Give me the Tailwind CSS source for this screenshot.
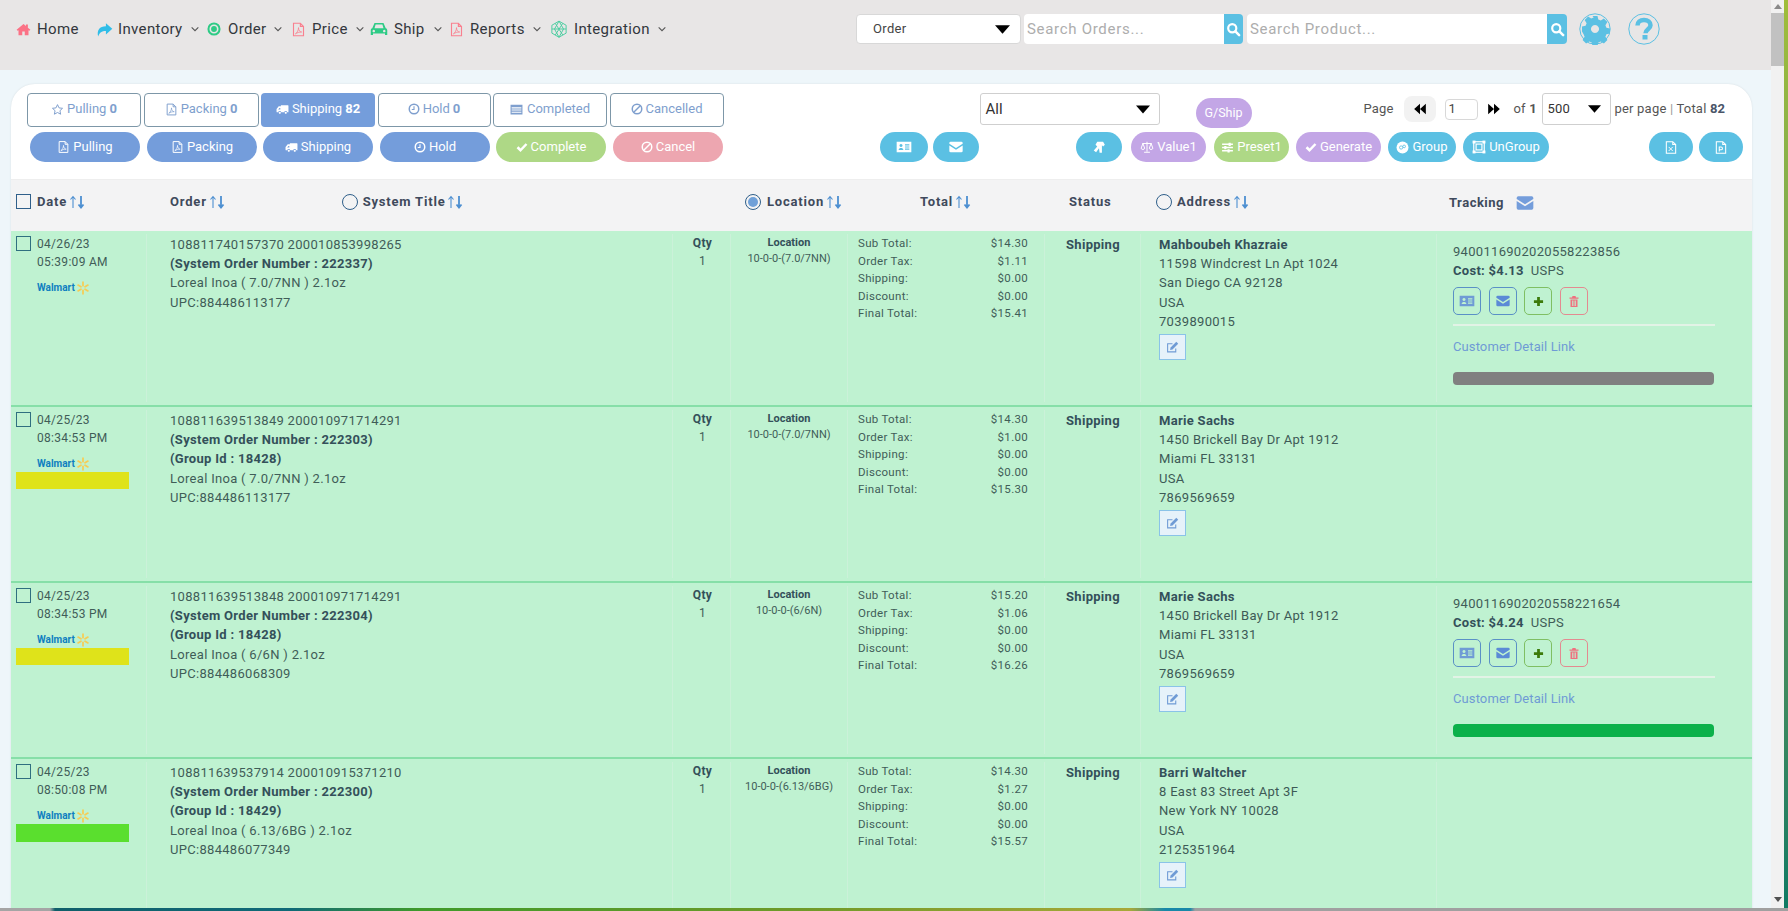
<!DOCTYPE html>
<html><head><meta charset="utf-8">
<script src="https://cdn.jsdelivr.net/npm/@tailwindcss/browser@4"></script>
<title>Orders</title></head>
<body class="h-[911px] w-[1788px] overflow-hidden font-['Roboto',sans-serif] bg-[#eef6fa]">
<svg class="hidden" width="0" height="0">
<symbol id="home" viewBox="0 0 24 24"><path fill="currentColor" d="M12 3 1 12.500l1.500 1.600L4 13v8h6v-6h4v6h6v-8l1.500 1.100L23 12.500 19 9V4h-3v2.400z"/></symbol>
<symbol id="share" viewBox="0 0 24 24"><path fill="currentColor" d="M14 3l9 8-9 8v-5C8 14 5 16 3 22 1 13 5 7.500 14 7.500z"/></symbol>
<symbol id="dot" viewBox="0 0 24 24"><circle cx="12" cy="12" r="9.500" fill="none" stroke="currentColor" stroke-width="3.500"/><circle cx="12" cy="12" r="5" fill="currentColor"/></symbol>
<symbol id="pdf" viewBox="0 0 24 24"><path fill="none" stroke="currentColor" stroke-width="1.800" d="M4 2h11l5 5v15H4zM15 2v5h5"/><path fill="none" stroke="currentColor" stroke-width="1.300" d="M7 19c3-2 5-6 5-10 0 4 2 7 5 7-4 0-7 1-10 3z"/></symbol>
<symbol id="car" viewBox="0 0 24 24"><path fill="currentColor" d="M6 4h12l3 7c1.500.5 2 1.500 2 3v6h-3v-2H4v2H1v-6c0-1.500.5-2.500 2-3zm1.500 2L6 11h12l-1.500-5zM5 13a1.700 1.700 0 1 0 .01 0zM19 13a1.700 1.700 0 1 0 .01 0z" fill-rule="evenodd"/></symbol>
<symbol id="hex" viewBox="0 0 24 24"><g fill="none" stroke="currentColor" stroke-width="1.300"><path d="M12 1.500 21.500 7v10.500L12 23 2.500 17.500V7z"/><path d="M7 4.500 17 20M17 4.500 7 20M2.500 12h19M12 1.500 6 12l6 11 6-11z"/></g></symbol>
<symbol id="chev" viewBox="0 0 12 12"><path fill="none" stroke="currentColor" stroke-width="1.300" d="M2 4l4 4 4-4"/></symbol>
<symbol id="search" viewBox="0 0 24 24"><circle cx="10" cy="10" r="6.500" fill="none" stroke="currentColor" stroke-width="3.500"/><path stroke="currentColor" stroke-width="4" stroke-linecap="round" d="M15 15l6 6"/></symbol>
<symbol id="star" viewBox="0 0 24 24"><path fill="none" stroke="currentColor" stroke-width="1.800" d="M12 3l2.800 6 6.500.8-4.800 4.400 1.300 6.500L12 17.500l-5.800 3.200 1.300-6.500L2.700 9.800 9.200 9z"/></symbol>
<symbol id="truck" viewBox="0 0 24 24"><path fill="currentColor" d="M9 4h13a1 1 0 0 1 1 1v12h-2.200a3 3 0 0 0-5.800 0H9.800a3 3 0 0 0-5.800 0H2a1 1 0 0 1-1-1v-5l4-5h4zM4 12h4V9H6.400zM7 16a2 2 0 1 1-.01 0zM18 16a2 2 0 1 1-.01 0z" fill-rule="evenodd"/></symbol>
<symbol id="clock" viewBox="0 0 24 24"><circle cx="12" cy="12" r="9.500" fill="none" stroke="currentColor" stroke-width="3"/><path fill="none" stroke="currentColor" stroke-width="2.200" d="M12 6.500V13H7.500"/></symbol>
<symbol id="list" viewBox="0 0 24 24"><path fill="currentColor" fill-rule="evenodd" d="M1 3h22v18H1zM3 8v2h18V8zM3 12v2h18v-2zM3 16v2h18v-2z"/></symbol>
<symbol id="ban" viewBox="0 0 24 24"><circle cx="12" cy="12" r="9.500" fill="none" stroke="currentColor" stroke-width="3"/><path stroke="currentColor" stroke-width="3" d="M5.500 18.500l13-13"/></symbol>
<symbol id="check" viewBox="0 0 24 24"><path fill="none" stroke="currentColor" stroke-width="5" d="M3 12.500l6 6L21 6"/></symbol>
<symbol id="idcard" viewBox="0 0 24 24"><path fill="currentColor" fill-rule="evenodd" d="M1 4h22v16H1zM13.500 8v1.600H20V8zM13.500 11.200v1.600H20v-1.600zM13.500 14.400V16H20v-1.600zM7.500 7.500a2.300 2.300 0 1 0 .01 0zM4 16.500h7c0-4-7-4-7 0z"/></symbol>
<symbol id="mail" viewBox="0 0 24 24"><path fill="currentColor" d="M4 4h16a2 2 0 0 1 2 2v1.200L12 13.500 2 7.200V6a2 2 0 0 1 2-2zM2 9.700l10 6.300 10-6.300V18a2 2 0 0 1-2 2H4a2 2 0 0 1-2-2z"/></symbol>
<symbol id="wrench" viewBox="0 0 24 24"><path fill="currentColor" d="M13 3h6l3 5-3 3-2-2v13h-4l-1-8-5 7-4-3 6-7-3-3 3-5z"/></symbol>
<symbol id="scale" viewBox="0 0 24 24"><path fill="none" stroke="currentColor" stroke-width="1.700" d="M12 3v17M7 21h10M4 6h16M5 6 2 14c0 3 6 3 6 0zM19 6l-3 8c0 3 6 3 6 0z"/></symbol>
<symbol id="sliders" viewBox="0 0 24 24"><path fill="none" stroke="currentColor" stroke-width="2.400" d="M2 6h20M2 12h20M2 18h20"/><path fill="currentColor" d="M14 3h4v6h-4zM6 9h4v6H6zM12 15h4v6h-4z"/></symbol>
<symbol id="group" viewBox="0 0 24 24"><circle cx="12" cy="12" r="11" fill="currentColor"/><circle cx="9.500" cy="12" r="3" fill="none" stroke="#5bc0e3" stroke-width="1.500"/><circle cx="15" cy="10" r="2.500" fill="none" stroke="#5bc0e3" stroke-width="1.500"/></symbol>
<symbol id="ungroup" viewBox="0 0 24 24"><g fill="none" stroke="currentColor" stroke-width="2"><rect x="3" y="3" width="18" height="18"/><rect x="7" y="7" width="10" height="10"/></g><g fill="currentColor"><rect x="1" y="1" width="5" height="5"/><rect x="18" y="1" width="5" height="5"/><rect x="1" y="18" width="5" height="5"/><rect x="18" y="18" width="5" height="5"/></g></symbol>
<symbol id="plus" viewBox="0 0 24 24"><path stroke="currentColor" stroke-width="6" d="M12 2v20M2 12h20"/></symbol>
<symbol id="trash" viewBox="0 0 24 24"><path fill="currentColor" fill-rule="evenodd" d="M9 1h6l1 3h5v2.500H3V4h5zM5 8h14v15H5zM8 10v11h1.500V10zM11.300 10v11h1.500V10zM14.500 10v11H16V10z"/></symbol>
<symbol id="edit" viewBox="0 0 24 24"><path fill="none" stroke="currentColor" stroke-width="2" d="M18 14v6H3V5h9"/><path fill="currentColor" d="M19 1.500l3.500 3.500L12 15.500l-4.500 1 1-4.500z"/></symbol>
<symbol id="sort" viewBox="0 0 16 14"><g fill="none" stroke="#4d8fd1"><path stroke-width="1.100" d="M4 13V2M1.500 4.500 4 1.500l2.500 3"/><path stroke-width="1.800" d="M12 1v11M9.500 9.500 12 12.500l2.500-3"/></g></symbol>
<symbol id="left" viewBox="0 0 24 24"><path fill="currentColor" d="M12 3v18L2 12zM22 3v18l-10-9z"/></symbol>
<symbol id="right" viewBox="0 0 24 24"><path fill="currentColor" d="M12 3v18l10-9zM2 3v18l10-9z"/></symbol>
<symbol id="spark" viewBox="0 0 24 24"><path stroke="#f6cd55" stroke-width="3" stroke-linecap="round" d="M12 2v6M12 16v6M3.500 7l5 3M15.500 14l5 3M3.500 17l5-3M15.500 10l5-3"/></symbol>
<symbol id="gear" viewBox="0 0 32 32"><circle cx="16" cy="16" r="15.200" fill="none" stroke="#5bc0e3" stroke-width="1"/><path fill="#5bc0e3" fill-rule="evenodd" d="M13.500 3h5l.8 3.600 2.500 1 3.100-2 3.500 3.500-2 3.100 1 2.500 3.600.8v5l-3.600.8-1 2.500 2 3.100-3.500 3.500-3.100-2-2.500 1-.8 3.600h-5l-.8-3.600-2.500-1-3.100 2-3.500-3.500 2-3.100-1-2.500L3 18.500v-5l3.600-.8 1-2.500-2-3.100 3.500-3.500 3.100 2 2.500-1zM16 12a4 4 0 1 0 .01 0z"/></symbol>
<symbol id="help" viewBox="0 0 32 32"><circle cx="16" cy="16" r="15.200" fill="none" stroke="#5bc0e3" stroke-width="1"/><path fill="none" stroke="#5bc0e3" stroke-width="4.500" d="M9.500 12.500C9.500 9 12 7 16 7s6.500 2 6.500 5.200c0 4-5 4-5 8"/><rect x="14.500" y="22" width="5" height="4.500" fill="#5bc0e3"/></symbol>
<symbol id="xl" viewBox="0 0 24 24"><path fill="none" stroke="currentColor" stroke-width="1.800" d="M4 2h11l5 5v15H4zM15 2v5h5"/><path stroke="currentColor" stroke-width="1.600" d="M8 11l7 7M15 11l-7 7"/></symbol>
<symbol id="pp" viewBox="0 0 24 24"><path fill="none" stroke="currentColor" stroke-width="1.800" d="M4 2h11l5 5v15H4zM15 2v5h5M9 19v-8h3a2.500 2.500 0 0 1 0 5H9"/></symbol>
</svg>

<div class="flex h-[908px]">
<div class="w-[1771px] shrink-0 overflow-hidden">
  <!-- top nav -->
  <nav class="flex h-[70px] items-start bg-[#e8e6e6] pl-[16px] pt-[14px] text-[15px] leading-[30px] tracking-[0.35px] text-[#33373d]">
    <div class="flex items-center w-[80px]"><svg class="w-[15px] h-[15px] text-[#fb7286] mr-[6px]"><use href="#home"/></svg>Home</div>
    <div class="flex items-center w-[111px]"><svg class="w-[17px] h-[17px] text-[#30bde8] mr-[5px]"><use href="#share"/></svg>Inventory<svg class="w-[10px] h-[10px] ml-[7px] text-[#555]"><use href="#chev"/></svg></div>
    <div class="flex items-center w-[84px]"><svg class="w-[14px] h-[14px] text-[#2ecb86] mr-[7px]"><use href="#dot"/></svg>Order<svg class="w-[10px] h-[10px] ml-[6px] text-[#555]"><use href="#chev"/></svg></div>
    <div class="flex items-center w-[79px]"><svg class="w-[15px] h-[17px] text-[#f9808f] mr-[6px]"><use href="#pdf"/></svg>Price<svg class="w-[10px] h-[10px] ml-[7px] text-[#555]"><use href="#chev"/></svg></div>
    <div class="flex items-center w-[79px]"><svg class="w-[18px] h-[18px] text-[#2ecb86] mr-[6px]"><use href="#car"/></svg>Ship<svg class="w-[10px] h-[10px] ml-[8px] text-[#555]"><use href="#chev"/></svg></div>
    <div class="flex items-center w-[101px]"><svg class="w-[15px] h-[17px] text-[#f9808f] mr-[6px]"><use href="#pdf"/></svg>Reports<svg class="w-[10px] h-[10px] ml-[7px] text-[#555]"><use href="#chev"/></svg></div>
    <div class="flex items-center w-[124px]"><svg class="w-[18px] h-[18px] text-[#4ccda0] mr-[6px]"><use href="#hex"/></svg>Integration<svg class="w-[10px] h-[10px] ml-[7px] text-[#555]"><use href="#chev"/></svg></div>
    <div class="ml-[182px] flex w-[165px] h-[30px] items-center justify-between rounded-[4px] border border-[#d8d8d8] bg-white pl-[16px] pr-[10px] text-[13px] text-[#444]"><span>Order</span><svg class="w-[15px] h-[9px] text-black" viewBox="0 0 14 8"><path fill="currentColor" d="M0 0h14L7 8z"/></svg></div>
    <div class="ml-[3px] flex h-[30px]"><input class="w-[200px] rounded-l-[4px] bg-white px-[3px] text-[15px] tracking-[0.7px] placeholder:text-[#adadad]" placeholder="Search Orders..."><div class="flex w-[19px] items-center justify-center rounded-r-[4px] bg-[#5bc0e3]"><svg class="w-[15px] h-[15px] text-white"><use href="#search"/></svg></div></div>
    <div class="ml-[4px] flex h-[30px]"><input class="w-[300px] rounded-l-[4px] bg-white px-[3px] text-[15px] tracking-[0.7px] placeholder:text-[#adadad]" placeholder="Search Product..."><div class="flex w-[20px] items-center justify-center rounded-r-[4px] bg-[#5bc0e3]"><svg class="w-[15px] h-[15px] text-white"><use href="#search"/></svg></div></div>
    <svg class="ml-[12px] w-[32px] h-[32px] -mt-[1px]"><use href="#gear"/></svg>
    <svg class="ml-[17px] w-[32px] h-[32px] -mt-[1px]"><use href="#help"/></svg>
  </nav>

  <main class="pl-[11px] pt-[14px]">
  <div class="w-[1741px] rounded-t-[24px] bg-white shadow-[0_0_2px_#d5dde0] text-[13px]">
    <!-- toolbar row 1 -->
    <div class="flex items-start h-[48px] pt-[9px] pl-[16px] text-[13px]">
      <div class="flex gap-[2.500px] text-[#7f9fce]">
        <div class="flex w-[114px] h-[34px] pb-[2px] items-center justify-center gap-[3px] rounded-[4px] border border-[#7d97a8]"><svg class="w-[13px] h-[13px]"><use href="#star"/></svg>Pulling <b>0</b></div>
        <div class="flex w-[115px] h-[34px] pb-[2px] items-center justify-center gap-[3px] rounded-[4px] border border-[#7d97a8]"><svg class="w-[13px] h-[13px]"><use href="#pdf"/></svg>Packing <b>0</b></div>
        <div class="flex w-[114px] h-[34px] pb-[2px] items-center justify-center gap-[3px] rounded-[4px] bg-[#749ddb] text-white"><svg class="w-[13px] h-[13px]"><use href="#truck"/></svg>Shipping <b>82</b></div>
        <div class="flex w-[113px] h-[34px] pb-[2px] items-center justify-center gap-[3px] rounded-[4px] border border-[#7d97a8]"><svg class="w-[12px] h-[12px]"><use href="#clock"/></svg>Hold <b>0</b></div>
        <div class="flex w-[114px] h-[34px] pb-[2px] items-center justify-center gap-[4px] rounded-[4px] border border-[#7d97a8]"><svg class="w-[13px] h-[13px]"><use href="#list"/></svg>Completed</div>
        <div class="flex w-[114px] h-[34px] pb-[2px] items-center justify-center gap-[3px] rounded-[4px] border border-[#7d97a8]"><svg class="w-[12px] h-[12px]"><use href="#ban"/></svg>Cancelled</div>
      </div>
      <div class="ml-[256px] flex w-[180px] h-[32px] items-center justify-between rounded-[3px] border border-[#cfcfcf] px-[5px] pr-[9px] text-[15px] text-[#333]"><span>All</span><svg class="w-[14px] h-[9px]" viewBox="0 0 14 8"><path d="M0 0h14L7 8z"/></svg></div>
      <div class="ml-[36px] mt-[5px] flex w-[56px] h-[30px] items-center justify-center rounded-full bg-[#c3a6e6] text-white text-[12.500px]">G/Ship</div>
      <div class="ml-[112px] flex items-center h-[32px] text-[#555] text-[13px] tracking-[0.2px]">
        <span class="w-[40px]">Page</span>
        <span class="flex w-[32px] h-[26px] items-center justify-center rounded-[8px] bg-[#f2f2f2]"><svg class="w-[14px] h-[14px] text-black"><use href="#left"/></svg></span>
        <span class="ml-[9px] flex w-[33px] h-[21px] items-center rounded-[4px] border border-[#d8d8d8] pl-[3px] text-[#444]">1</span>
        <svg class="ml-[9px] w-[14px] h-[14px] text-black"><use href="#right"/></svg>
        <span class="ml-[13px] w-[28px]">of <b>1</b></span>
        <span class="flex w-[69px] h-[32px] items-center justify-between rounded-[3px] border border-[#cfcfcf] px-[5px] pr-[9px] text-[#333]">500<svg class="w-[13px] h-[8px]" viewBox="0 0 14 8"><path d="M0 0h14L7 8z"/></svg></span>
        <span class="ml-[4px] whitespace-nowrap">per page <span class="text-[#999]">|</span> Total <b class="text-[#4a5568]">82</b></span>
      </div>
    </div>
    <!-- toolbar row 2 -->
    <div class="flex items-center h-[30px] pl-[19px] text-white text-[13px]">
      <div class="flex w-[110px] h-[30px] items-center justify-center gap-[3px] rounded-full bg-[#749ddb]"><svg class="w-[13px] h-[14px]"><use href="#pdf"/></svg>Pulling</div>
      <div class="ml-[7px] flex w-[110px] h-[30px] items-center justify-center gap-[3px] rounded-full bg-[#749ddb]"><svg class="w-[13px] h-[14px]"><use href="#pdf"/></svg>Packing</div>
      <div class="ml-[6px] flex w-[110px] h-[30px] items-center justify-center gap-[3px] rounded-full bg-[#749ddb]"><svg class="w-[13px] h-[13px]"><use href="#truck"/></svg>Shipping</div>
      <div class="ml-[7px] flex w-[110px] h-[30px] items-center justify-center gap-[3px] rounded-full bg-[#749ddb]"><svg class="w-[12px] h-[12px]"><use href="#clock"/></svg>Hold</div>
      <div class="ml-[6px] flex w-[110px] h-[30px] items-center justify-center gap-[3px] rounded-full bg-[#aed886]"><svg class="w-[12px] h-[12px]"><use href="#check"/></svg>Complete</div>
      <div class="ml-[7px] flex w-[110px] h-[30px] items-center justify-center gap-[3px] rounded-full bg-[#eda6b0]"><svg class="w-[12px] h-[12px]"><use href="#ban"/></svg>Cancel</div>
      <div class="ml-[157px] flex w-[48px] h-[30px] items-center justify-center rounded-full bg-[#5bc0e3]"><svg class="w-[16px] h-[16px]"><use href="#idcard"/></svg></div>
      <div class="ml-[5px] flex w-[46px] h-[30px] items-center justify-center rounded-full bg-[#5bc0e3]"><svg class="w-[16px] h-[16px]"><use href="#mail"/></svg></div>
      <div class="ml-[97px] flex w-[46px] h-[30px] items-center justify-center rounded-full bg-[#5bc0e3]"><svg class="w-[14px] h-[14px]"><use href="#wrench"/></svg></div>
      <div class="ml-[9px] flex w-[75px] h-[30px] items-center justify-center gap-[3px] rounded-full bg-[#c3a6e6]"><svg class="w-[14px] h-[14px]"><use href="#scale"/></svg>Value1</div>
      <div class="ml-[8px] flex w-[75px] h-[30px] items-center justify-center gap-[3px] rounded-full bg-[#aed886]"><svg class="w-[13px] h-[13px]"><use href="#sliders"/></svg>Preset1</div>
      <div class="ml-[7px] flex w-[85px] h-[30px] items-center justify-center gap-[3px] rounded-full bg-[#c3a6e6]"><svg class="w-[12px] h-[12px]"><use href="#check"/></svg>Generate</div>
      <div class="ml-[7px] flex w-[68px] h-[30px] items-center justify-center gap-[3px] rounded-full bg-[#5bc0e3]"><svg class="w-[13px] h-[13px]"><use href="#group"/></svg>Group</div>
      <div class="ml-[7px] flex w-[86px] h-[30px] items-center justify-center gap-[3px] rounded-full bg-[#5bc0e3]"><svg class="w-[14px] h-[14px]"><use href="#ungroup"/></svg>UnGroup</div>
      <div class="ml-[100px] flex w-[44px] h-[30px] items-center justify-center rounded-full bg-[#5bc0e3]"><svg class="w-[14px] h-[15px]"><use href="#xl"/></svg></div>
      <div class="ml-[6px] flex w-[44px] h-[30px] items-center justify-center rounded-full bg-[#5bc0e3]"><svg class="w-[14px] h-[15px]"><use href="#pp"/></svg></div>
    </div>
    <div class="h-[17px]"></div>
    <!-- table header -->
    <div class="grid grid-cols-[136px_526px_58px_117px_197px_96px_296px_315px] h-[52px] items-center bg-[#f3f3f4] text-[13px] font-bold tracking-[0.8px] text-[#3f4a5c] pb-[8px] border-t border-[#eeeeee]">
      <div class="flex items-center pl-[5px]"><span class="w-[15px] h-[15px] border border-[#2f5f8a] mr-[6px]"></span>Date<svg class="ml-[2px] w-[16px] h-[14px]"><use href="#sort"/></svg></div>
      <div class="flex items-center"><span class="pl-[23px]">Order</span><svg class="ml-[2px] w-[16px] h-[14px]"><use href="#sort"/></svg><span class="ml-[117px] w-[16px] h-[16px] rounded-full border border-[#2f5f8a] mr-[5px]"></span>System Title<svg class="ml-[2px] w-[16px] h-[14px]"><use href="#sort"/></svg></div>
      <div></div>
      <div class="flex items-center pl-[14px] whitespace-nowrap"><span class="w-[16px] h-[16px] rounded-full border border-[#2f5f8a] mr-[6px] flex items-center justify-center"><span class="w-[10px] h-[10px] rounded-full bg-[#6fa0d8]"></span></span>Location<svg class="ml-[2px] w-[16px] h-[14px]"><use href="#sort"/></svg></div>
      <div class="flex items-center pl-[72px]">Total<svg class="ml-[2px] w-[16px] h-[14px]"><use href="#sort"/></svg></div>
      <div class="pl-[24px]">Status</div>
      <div class="flex items-center pl-[15px]"><span class="w-[16px] h-[16px] rounded-full border border-[#2f5f8a] mr-[5px]"></span>Address<svg class="ml-[2px] w-[16px] h-[14px]"><use href="#sort"/></svg></div>
      <div class="flex items-center pl-[12px] pt-[2px] tracking-[0.5px]">Tracking<svg class="ml-[11px] w-[20px] h-[20px] text-[#749ddb]"><use href="#mail"/></svg></div>
    </div>

    <!-- row 1 -->
    <div class="grid grid-cols-[136px_526px_58px_117px_197px_96px_296px_315px] h-[176px] bg-[#bff2d1] border-b-2 border-[#86dfa8] text-[#3f5d58] tracking-[0.3px]">
      <div class="flex pl-[5px] pt-[2px] my-[3px] border-r border-[#cbf1d9]"><span class="w-[15px] h-[15px] border border-[#2f6f80] mr-[6px] shrink-0"></span><div class="text-[12px] leading-[18px] -mt-[1px]">04/26/23<br>05:39:09 AM<div class="mt-[9px] flex h-[16px] items-center text-[10px] font-bold tracking-normal text-[#0f7fc0]">Walmart<svg class="ml-[1px] w-[14px] h-[14px]"><use href="#spark"/></svg></div></div></div>
      <div class="pl-[23px] pt-[1px] my-[3px] leading-[19.200px] border-r border-[#cbf1d9]">108811740157370 200010853998265<br><b class="text-[#34505a]">(System Order Number : 222337)</b><br>Loreal Inoa ( 7.0/7NN ) 2.1oz<br>UPC:884486113177</div>
      <div class="text-center pl-[2px] my-[3px] text-[12px] leading-[18px] border-r border-[#cbf1d9]"><b class="text-[#34505a]">Qty</b><br>1</div>
      <div class="text-center pt-[1px] my-[3px] text-[11px] leading-[16px] border-r border-[#cbf1d9] tracking-normal"><b class="text-[#34505a]">Location</b><br>10-0-0-(7.0/7NN)</div>
      <div class="pl-[10px] pr-[16px] pt-[1px] my-[3px] text-[11.500px] leading-[17.500px] border-r border-[#cbf1d9]"><div class="flex justify-between"><span>Sub Total:</span><span>$14.30</span></div><div class="flex justify-between"><span>Order Tax:</span><span>$1.11</span></div><div class="flex justify-between"><span>Shipping:</span><span>$0.00</span></div><div class="flex justify-between"><span>Discount:</span><span>$0.00</span></div><div class="flex justify-between"><span>Final Total:</span><span>$15.41</span></div></div>
      <div class="pl-[21px] pt-[1px] my-[3px] font-bold leading-[19px] text-[#34505a] border-r border-[#cbf1d9]">Shipping</div>
      <div class="pl-[18px] pt-[1px] my-[3px] leading-[19.200px] border-r border-[#cbf1d9] text-[#3d5a56]"><b class="text-[#34505a]">Mahboubeh Khazraie</b><br>11598 Windcrest Ln Apt 1024<br>San Diego CA 92128<br>USA<br>7039890015<button class="mt-[3px] flex w-[27px] h-[26px] items-center justify-center border border-[#8ac3e8] bg-[#e6f2fa] text-[#6f9bd5]"><svg class="w-[13px] h-[13px]"><use href="#edit"/></svg></button></div>
      <div class="pl-[16px] pt-[11px] leading-[19px]">9400116902020558223856<br><b class="text-[#34505a]">Cost: $4.13</b> &nbsp;USPS
        <div class="mt-[7px] flex gap-[7.500px]"><button class="flex w-[28px] h-[28px] items-center justify-center rounded-[5px] border border-[#5a90c6] text-[#6f9bd5]"><svg class="w-[16px] h-[16px]"><use href="#idcard"/></svg></button><button class="flex w-[28px] h-[28px] items-center justify-center rounded-[5px] border border-[#5a90c6] text-[#5b8ad6]"><svg class="w-[16px] h-[16px]"><use href="#mail"/></svg></button><button class="flex w-[28px] h-[28px] items-center justify-center rounded-[5px] border border-[#7fbf63] text-[#3c7a0a]"><svg class="w-[11px] h-[11px]"><use href="#plus"/></svg></button><button class="flex w-[28px] h-[28px] items-center justify-center rounded-[5px] border border-[#e48a90] text-[#f0717f]"><svg class="w-[12px] h-[13px]"><use href="#trash"/></svg></button></div>
        <div class="mt-[9px] h-[2px] w-[262px] bg-[#e2f3e6]"></div>
        <div class="mt-[11px] text-[#6f9bd5] tracking-[0.1px]">Customer Detail Link</div>
        <div class="mt-[16px] h-[13px] w-[261px] rounded-[4px] bg-[#808080]"></div>
      </div>
    </div>

    <!-- row 2 -->
    <div class="grid grid-cols-[136px_526px_58px_117px_197px_96px_296px_315px] h-[176px] bg-[#bff2d1] border-b-2 border-[#86dfa8] text-[#3f5d58] tracking-[0.3px]">
      <div class="pl-[5px] pt-[2px] my-[3px] border-r border-[#cbf1d9]"><div class="flex"><span class="w-[15px] h-[15px] border border-[#2f6f80] mr-[6px] shrink-0"></span><div class="text-[12px] leading-[18px] -mt-[1px]">04/25/23<br>08:34:53 PM<div class="mt-[9px] flex h-[16px] items-center text-[10px] font-bold tracking-normal text-[#0f7fc0]">Walmart<svg class="ml-[1px] w-[14px] h-[14px]"><use href="#spark"/></svg></div></div></div><div class="h-[17px] w-[113px] bg-[#dfe31a]"></div></div>
      <div class="pl-[23px] pt-[1px] my-[3px] leading-[19.200px] border-r border-[#cbf1d9]">108811639513849 200010971714291<br><b class="text-[#34505a]">(System Order Number : 222303)</b><br><b class="text-[#34505a]">(Group Id : 18428)</b><br>Loreal Inoa ( 7.0/7NN ) 2.1oz<br>UPC:884486113177</div>
      <div class="text-center pl-[2px] my-[3px] text-[12px] leading-[18px] border-r border-[#cbf1d9]"><b class="text-[#34505a]">Qty</b><br>1</div>
      <div class="text-center pt-[1px] my-[3px] text-[11px] leading-[16px] border-r border-[#cbf1d9] tracking-normal"><b class="text-[#34505a]">Location</b><br>10-0-0-(7.0/7NN)</div>
      <div class="pl-[10px] pr-[16px] pt-[1px] my-[3px] text-[11.500px] leading-[17.500px] border-r border-[#cbf1d9]"><div class="flex justify-between"><span>Sub Total:</span><span>$14.30</span></div><div class="flex justify-between"><span>Order Tax:</span><span>$1.00</span></div><div class="flex justify-between"><span>Shipping:</span><span>$0.00</span></div><div class="flex justify-between"><span>Discount:</span><span>$0.00</span></div><div class="flex justify-between"><span>Final Total:</span><span>$15.30</span></div></div>
      <div class="pl-[21px] pt-[1px] my-[3px] font-bold leading-[19px] text-[#34505a] border-r border-[#cbf1d9]">Shipping</div>
      <div class="pl-[18px] pt-[1px] my-[3px] leading-[19.200px] border-r border-[#cbf1d9] text-[#3d5a56]"><b class="text-[#34505a]">Marie Sachs</b><br>1450 Brickell Bay Dr Apt 1912<br>Miami FL 33131<br>USA<br>7869569659<button class="mt-[3px] flex w-[27px] h-[26px] items-center justify-center border border-[#8ac3e8] bg-[#e6f2fa] text-[#6f9bd5]"><svg class="w-[13px] h-[13px]"><use href="#edit"/></svg></button></div>
      <div></div>
    </div>

    <!-- row 3 -->
    <div class="grid grid-cols-[136px_526px_58px_117px_197px_96px_296px_315px] h-[176px] bg-[#bff2d1] border-b-2 border-[#86dfa8] text-[#3f5d58] tracking-[0.3px]">
      <div class="pl-[5px] pt-[2px] my-[3px] border-r border-[#cbf1d9]"><div class="flex"><span class="w-[15px] h-[15px] border border-[#2f6f80] mr-[6px] shrink-0"></span><div class="text-[12px] leading-[18px] -mt-[1px]">04/25/23<br>08:34:53 PM<div class="mt-[9px] flex h-[16px] items-center text-[10px] font-bold tracking-normal text-[#0f7fc0]">Walmart<svg class="ml-[1px] w-[14px] h-[14px]"><use href="#spark"/></svg></div></div></div><div class="h-[17px] w-[113px] bg-[#dfe31a]"></div></div>
      <div class="pl-[23px] pt-[1px] my-[3px] leading-[19.200px] border-r border-[#cbf1d9]">108811639513848 200010971714291<br><b class="text-[#34505a]">(System Order Number : 222304)</b><br><b class="text-[#34505a]">(Group Id : 18428)</b><br>Loreal Inoa ( 6/6N ) 2.1oz<br>UPC:884486068309</div>
      <div class="text-center pl-[2px] my-[3px] text-[12px] leading-[18px] border-r border-[#cbf1d9]"><b class="text-[#34505a]">Qty</b><br>1</div>
      <div class="text-center pt-[1px] my-[3px] text-[11px] leading-[16px] border-r border-[#cbf1d9] tracking-normal"><b class="text-[#34505a]">Location</b><br>10-0-0-(6/6N)</div>
      <div class="pl-[10px] pr-[16px] pt-[1px] my-[3px] text-[11.500px] leading-[17.500px] border-r border-[#cbf1d9]"><div class="flex justify-between"><span>Sub Total:</span><span>$15.20</span></div><div class="flex justify-between"><span>Order Tax:</span><span>$1.06</span></div><div class="flex justify-between"><span>Shipping:</span><span>$0.00</span></div><div class="flex justify-between"><span>Discount:</span><span>$0.00</span></div><div class="flex justify-between"><span>Final Total:</span><span>$16.26</span></div></div>
      <div class="pl-[21px] pt-[1px] my-[3px] font-bold leading-[19px] text-[#34505a] border-r border-[#cbf1d9]">Shipping</div>
      <div class="pl-[18px] pt-[1px] my-[3px] leading-[19.200px] border-r border-[#cbf1d9] text-[#3d5a56]"><b class="text-[#34505a]">Marie Sachs</b><br>1450 Brickell Bay Dr Apt 1912<br>Miami FL 33131<br>USA<br>7869569659<button class="mt-[3px] flex w-[27px] h-[26px] items-center justify-center border border-[#8ac3e8] bg-[#e6f2fa] text-[#6f9bd5]"><svg class="w-[13px] h-[13px]"><use href="#edit"/></svg></button></div>
      <div class="pl-[16px] pt-[11px] leading-[19px]">9400116902020558221654<br><b class="text-[#34505a]">Cost: $4.24</b> &nbsp;USPS
        <div class="mt-[7px] flex gap-[7.500px]"><button class="flex w-[28px] h-[28px] items-center justify-center rounded-[5px] border border-[#5a90c6] text-[#6f9bd5]"><svg class="w-[16px] h-[16px]"><use href="#idcard"/></svg></button><button class="flex w-[28px] h-[28px] items-center justify-center rounded-[5px] border border-[#5a90c6] text-[#5b8ad6]"><svg class="w-[16px] h-[16px]"><use href="#mail"/></svg></button><button class="flex w-[28px] h-[28px] items-center justify-center rounded-[5px] border border-[#7fbf63] text-[#3c7a0a]"><svg class="w-[11px] h-[11px]"><use href="#plus"/></svg></button><button class="flex w-[28px] h-[28px] items-center justify-center rounded-[5px] border border-[#e48a90] text-[#f0717f]"><svg class="w-[12px] h-[13px]"><use href="#trash"/></svg></button></div>
        <div class="mt-[9px] h-[2px] w-[262px] bg-[#e2f3e6]"></div>
        <div class="mt-[11px] text-[#6f9bd5] tracking-[0.1px]">Customer Detail Link</div>
        <div class="mt-[16px] h-[13px] w-[261px] rounded-[4px] bg-[#0bb14a]"></div>
      </div>
    </div>

    <!-- row 4 -->
    <div class="grid grid-cols-[136px_526px_58px_117px_197px_96px_296px_315px] h-[176px] bg-[#bff2d1] text-[#3f5d58] tracking-[0.3px]">
      <div class="pl-[5px] pt-[2px] my-[3px] border-r border-[#cbf1d9]"><div class="flex"><span class="w-[15px] h-[15px] border border-[#2f6f80] mr-[6px] shrink-0"></span><div class="text-[12px] leading-[18px] -mt-[1px]">04/25/23<br>08:50:08 PM<div class="mt-[9px] flex h-[16px] items-center text-[10px] font-bold tracking-normal text-[#0f7fc0]">Walmart<svg class="ml-[1px] w-[14px] h-[14px]"><use href="#spark"/></svg></div></div></div><div class="h-[18px] w-[113px] bg-[#5adf2e]"></div></div>
      <div class="pl-[23px] pt-[1px] my-[3px] leading-[19.200px] border-r border-[#cbf1d9]">108811639537914 200010915371210<br><b class="text-[#34505a]">(System Order Number : 222300)</b><br><b class="text-[#34505a]">(Group Id : 18429)</b><br>Loreal Inoa ( 6.13/6BG ) 2.1oz<br>UPC:884486077349</div>
      <div class="text-center pl-[2px] my-[3px] text-[12px] leading-[18px] border-r border-[#cbf1d9]"><b class="text-[#34505a]">Qty</b><br>1</div>
      <div class="text-center pt-[1px] my-[3px] text-[11px] leading-[16px] border-r border-[#cbf1d9] tracking-normal"><b class="text-[#34505a]">Location</b><br>10-0-0-(6.13/6BG)</div>
      <div class="pl-[10px] pr-[16px] pt-[1px] my-[3px] text-[11.500px] leading-[17.500px] border-r border-[#cbf1d9]"><div class="flex justify-between"><span>Sub Total:</span><span>$14.30</span></div><div class="flex justify-between"><span>Order Tax:</span><span>$1.27</span></div><div class="flex justify-between"><span>Shipping:</span><span>$0.00</span></div><div class="flex justify-between"><span>Discount:</span><span>$0.00</span></div><div class="flex justify-between"><span>Final Total:</span><span>$15.57</span></div></div>
      <div class="pl-[21px] pt-[1px] my-[3px] font-bold leading-[19px] text-[#34505a] border-r border-[#cbf1d9]">Shipping</div>
      <div class="pl-[18px] pt-[1px] my-[3px] leading-[19.200px] border-r border-[#cbf1d9] text-[#3d5a56]"><b class="text-[#34505a]">Barri Waltcher</b><br>8 East 83 Street Apt 3F<br>New York NY 10028<br>USA<br>2125351964<button class="mt-[3px] flex w-[27px] h-[26px] items-center justify-center border border-[#8ac3e8] bg-[#e6f2fa] text-[#6f9bd5]"><svg class="w-[13px] h-[13px]"><use href="#edit"/></svg></button></div>
      <div></div>
    </div>
  </div>
  </main>
</div>
<!-- scrollbar -->
<div class="flex w-[13px] shrink-0 flex-col bg-[#f1f1f1]">
  <div class="flex h-[13px] items-center justify-center"><svg class="w-[8px] h-[5px]" viewBox="0 0 8 5"><path fill="#8a8a8a" d="M4 0l4 5H0z"/></svg></div>
  <div class="h-[53px] bg-[#c1c1c1]"></div>
  <div class="flex-1"></div>
  <div class="flex h-[18px] items-center justify-center"><svg class="w-[8px] h-[5px]" viewBox="0 0 8 5"><path fill="#505050" d="M4 5l4-5H0z"/></svg></div>
</div>
<div class="w-[4px] bg-gradient-to-b from-[#9fbd3a] to-[#0c7a63]"></div>
</div>
<div class="h-[3px] bg-[linear-gradient(to_right,#a5a5a5_0,#a5a5a5_50px,#0f5f6a_55px,#0f6a78_290px,#3f9a2a_420px,#6f9a28_800px,#a8a838_1130px,#1888a8_1165px,#1888a8_1190px,#a0a0a0_1195px,#a0a0a0_100%)]"></div>
</body></html>
